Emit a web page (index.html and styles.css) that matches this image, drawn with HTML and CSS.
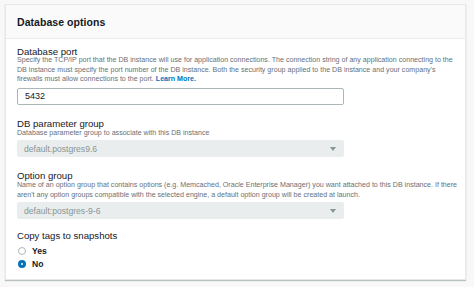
FILE: index.html
```html
<!DOCTYPE html>
<html>
<head>
<meta charset="utf-8">
<link rel="stylesheet" href="styles.css">
</head>
<body>
<div class="card">
  <div class="card-header"><h2 class="title">Database options</h2></div>
  <div class="card-body">
    <div class="field">
      <div class="label">Database port</div>
      <div class="desc">Specify the TCP/IP port that the DB instance will use for application connections. The connection string of any application connecting to the DB instance must specify the port number of the DB instance. Both the security group applied to the DB instance and your company's firewalls must allow connections to the port. <a class="link" href="#">Learn More.</a></div>
      <div class="input">5432</div>
    </div>
    <div class="field">
      <div class="label">DB parameter group</div>
      <div class="desc">Database parameter group to associate with this DB instance</div>
      <div class="select"><span>default.postgres9.6</span><svg class="caret" width="6" height="4" viewBox="0 0 6 4"><path d="M0 0H6L3 4Z" fill="#879596"/></svg></div>
    </div>
    <div class="field tight">
      <div class="label">Option group</div>
      <div class="desc">Name of an option group that contains options (e.g. Memcached, Oracle Enterprise Manager) you want attached to this DB instance. If there aren't any option groups compatible with the selected engine, a default option group will be created at launch.</div>
      <div class="select"><span>default:postgres-9-6</span><svg class="caret" width="6" height="4" viewBox="0 0 6 4"><path d="M0 0H6L3 4Z" fill="#879596"/></svg></div>
    </div>
    <div class="field last">
      <div class="label">Copy tags to snapshots</div>
      <div class="radios">
        <div class="radio-row"><span class="radio"></span><span class="radio-text">Yes</span></div>
        <div class="radio-row"><span class="radio checked"></span><span class="radio-text">No</span></div>
      </div>
    </div>
  </div>
</div>
</body>
</html>
```
FILE: styles.css
```css
html, body {
  margin: 0;
  padding: 0;
}
body {
  background: #f8f8f8;
  font-family: "Liberation Sans", Arial, sans-serif;
  color: #16191f;
  padding: 4px 0 0 5px;
  width: 474px;
  height: 287px;
  box-sizing: border-box;
  overflow: hidden;
}
.card {
  width: 461px;
  height: 276px;
  box-sizing: border-box;
  background: #fff;
  border: 1px solid #e6e9e9;
  box-shadow: 0 1px 1px rgba(0, 28, 36, 0.25);
}
.card-header {
  height: 34px;
  box-sizing: border-box;
  background: #fafafa;
  border-bottom: 1px solid #eaeded;
  display: flex;
  align-items: center;
  padding: 0 11px;
}
.title {
  margin: 0;
  font-size: 10.5px;
  font-weight: bold;
  color: #16191f;
  letter-spacing: 0.05px;
}
.card-body {
  padding: 7.5px 7px 0 11px;
}
.field {
  margin-bottom: 14px;
}
.field.tight {
  margin-bottom: 12px;
}
.label {
  font-size: 9.6px;
  line-height: 10px;
  color: #16191f;
}
.desc {
  font-size: 7.1px;
  line-height: 9.7px;
  color: #687078;
  margin-top: -0.5px;
}
.link {
  color: #0073bb;
  text-decoration: none;
  font-weight: bold;
}
.input {
  margin-top: 3px;
  width: 327px;
  height: 17px;
  box-sizing: border-box;
  border: 1px solid #aab7b8;
  border-radius: 2px;
  font-size: 9px;
  line-height: 15px;
  padding-left: 7px;
  color: #16191f;
}
.select {
  margin-top: 2px;
  width: 327px;
  height: 17px;
  box-sizing: border-box;
  background: #eaeded;
  border-radius: 2px;
  font-size: 8.6px;
  color: #879596;
  display: flex;
  align-items: center;
  justify-content: space-between;
  padding: 0 8px 0 7px;
}
.caret {
  display: block;
}
.radios {
  margin-top: 3px;
  display: flex;
  flex-direction: column;
}
.radio-row {
  height: 13px;
  display: flex;
  align-items: center;
}
.radio {
  width: 8px;
  height: 8px;
  box-sizing: border-box;
  border-radius: 50%;
  border: 1px solid #aab7b8;
  background: #fff;
  margin-left: 1px;
}
.radio.checked {
  border: 3px solid #0073bb;
}
.radio-text {
  margin-left: 6px;
  font-size: 8.6px;
  font-weight: bold;
  color: #16191f;
}
```
